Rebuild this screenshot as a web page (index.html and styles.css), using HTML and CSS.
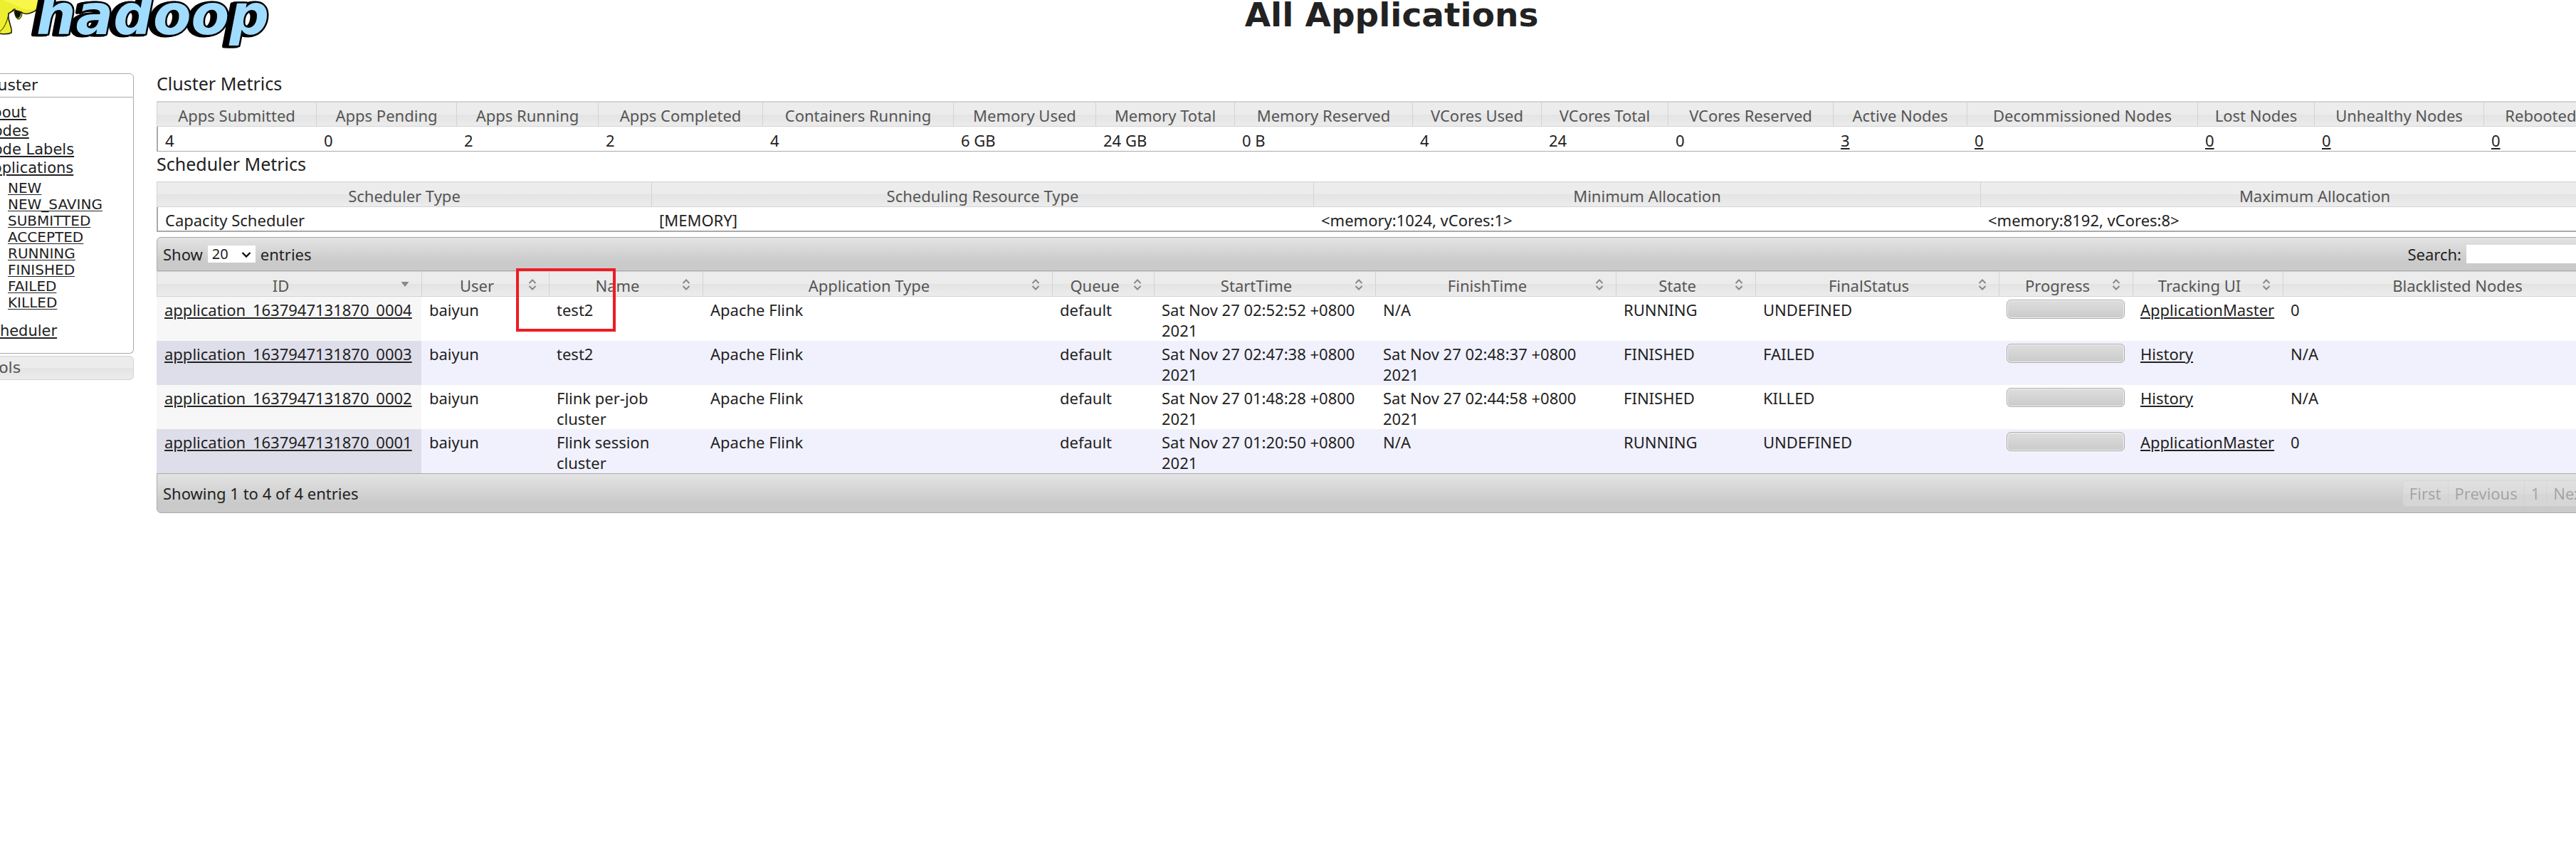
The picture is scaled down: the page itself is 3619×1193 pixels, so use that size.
FILE: index.html
```html
<!DOCTYPE html>
<html lang="en">
<head>
    <meta charset="UTF-8">
    <meta name="viewport" content="width=device-width, initial-scale=1.0">
    <title>All Applications</title>
    <link rel="stylesheet" href="styles.css">
</head>
<body>
    <!-- sort icons used in the table header -->
    <svg class="defs" width="0" height="0">
        <symbol id="sort-both" viewBox="0 0 12 16">
            <path d="M1.5 6 L6 1.5 L10.5 6 M1.5 10 L6 14.5 L10.5 10" fill="none" stroke="#888" stroke-width="2"/>
        </symbol>
        <symbol id="sort-desc" viewBox="0 0 12 16">
            <path d="M0.5 4 H11.5 L6 11 Z" fill="#888"/>
        </symbol>
    </svg>

    <div class="page">
        <header class="header">
            <a class="logo" href="#" aria-label="Hadoop">
                <svg width="430" height="90" viewBox="-48 -9 430 90">
                    <g stroke="#1a1a00" stroke-linejoin="round">
                        <path d="M-48 -9 H57 C57 6 54 14 46 17 C40 20 34 20 30 17 L20 14 L12 19 C10 30 18 38 16 46 C10 49 2 48 -6 46 L-20 40 Z" fill="#eeee30" stroke-width="1.5"/>
                        <path d="M12 20 C10 30 6 40 0 44" fill="none" stroke-width="1"/>
                        <path d="M20 16 C21 22 23 27 26 27 C30 26 31 22 31 18 Z" fill="#b8b800" stroke-width="1"/>
                        <path d="M21 15 C21 20 22 24 25 25 C28 24 29 20 29 17 Z" fill="#111" stroke-width="1"/>
                        <path d="M17 15 C18 13 20 12 22 13" fill="none" stroke-width="1"/>
                    </g>
                    <path d="M30 -9 H56 C56 4 53 10 46 13 C38 16 28 10 18 6 C10 2 2 0 -4 -4 Z" fill="#ffff66" opacity="0.5"/>
                    <text class="wordmark" x="51" y="48">hadoop</text>
                </svg>
            </a>
            <h1>All Applications</h1>
        </header>

        <div class="main">
            <nav class="sidebar">
                <h3 class="nav-title active">Cluster</h3>
                <div class="nav-body">
                    <ul>
                        <li><a href="#">About</a></li>
                        <li><a href="#">Nodes</a></li>
                        <li><a href="#">Node Labels</a></li>
                        <li><a href="#">Applications</a>
                            <ul class="states">
                                <li><a href="#">NEW</a></li>
                                <li><a href="#">NEW_SAVING</a></li>
                                <li><a href="#">SUBMITTED</a></li>
                                <li><a href="#">ACCEPTED</a></li>
                                <li><a href="#">RUNNING</a></li>
                                <li><a href="#">FINISHED</a></li>
                                <li><a href="#">FAILED</a></li>
                                <li><a href="#">KILLED</a></li>
                            </ul>
                        </li>
                        <li><a href="#">Scheduler</a></li>
                    </ul>
                </div>
                <h3 class="nav-title closed">Tools</h3>
            </nav>

            <div class="content">
                <h3>Cluster Metrics</h3>
                <table class="info metrics">
                    <thead>
                        <tr>
                            <th class="w-submitted">Apps Submitted</th>
                            <th class="w-pending">Apps Pending</th>
                            <th class="w-running">Apps Running</th>
                            <th class="w-completed">Apps Completed</th>
                            <th class="w-containers">Containers Running</th>
                            <th class="w-mem-used">Memory Used</th>
                            <th class="w-mem-total">Memory Total</th>
                            <th class="w-mem-reserved">Memory Reserved</th>
                            <th class="w-vc-used">VCores Used</th>
                            <th class="w-vc-total">VCores Total</th>
                            <th class="w-vc-reserved">VCores Reserved</th>
                            <th class="w-active">Active Nodes</th>
                            <th class="w-decommissioned">Decommissioned Nodes</th>
                            <th class="w-lost">Lost Nodes</th>
                            <th class="w-unhealthy">Unhealthy Nodes</th>
                            <th>Rebooted Nodes</th>
                        </tr>
                    </thead>
                    <tbody>
                        <tr>
                            <td>4</td>
                            <td>0</td>
                            <td>2</td>
                            <td>2</td>
                            <td>4</td>
                            <td>6 GB</td>
                            <td>24 GB</td>
                            <td>0 B</td>
                            <td>4</td>
                            <td>24</td>
                            <td>0</td>
                            <td><a href="#">3</a></td>
                            <td><a href="#">0</a></td>
                            <td><a href="#">0</a></td>
                            <td><a href="#">0</a></td>
                            <td><a href="#">0</a></td>
                        </tr>
                    </tbody>
                </table>

                <h3>Scheduler Metrics</h3>
                <table class="info scheduler">
                    <thead>
                        <tr>
                            <th class="w-type">Scheduler Type</th>
                            <th class="w-resource">Scheduling Resource Type</th>
                            <th class="w-min">Minimum Allocation</th>
                            <th>Maximum Allocation</th>
                        </tr>
                    </thead>
                    <tbody>
                        <tr>
                            <td>Capacity Scheduler</td>
                            <td>[MEMORY]</td>
                            <td>&lt;memory:1024, vCores:1&gt;</td>
                            <td>&lt;memory:8192, vCores:8&gt;</td>
                        </tr>
                    </tbody>
                </table>

                <div class="apps-wrapper">
                    <div class="toolbar top">
                        <label>Show
                            <span class="select">
                                <select>
                                    <option>20</option>
                                    <option>40</option>
                                    <option>60</option>
                                    <option>80</option>
                                    <option>100</option>
                                </select>
                                <svg viewBox="0 0 14 10"><path d="M1.5 2 L7 7.5 L12.5 2" fill="none" stroke="#111" stroke-width="2.4"/></svg>
                            </span>
                            entries</label>
                        <label>Search: <input type="text" class="search"></label>
                    </div>
                    <table class="apps">
                        <thead>
                            <tr>
                                <th class="w-id"><div class="sort"><span>ID</span><svg><use href="#sort-desc"/></svg></div></th>
                                <th class="w-user"><div class="sort"><span>User</span><svg><use href="#sort-both"/></svg></div></th>
                                <th class="w-name"><div class="sort"><span>Name</span><svg><use href="#sort-both"/></svg></div></th>
                                <th class="w-apptype"><div class="sort"><span>Application Type</span><svg><use href="#sort-both"/></svg></div></th>
                                <th class="w-queue"><div class="sort"><span>Queue</span><svg><use href="#sort-both"/></svg></div></th>
                                <th class="w-start"><div class="sort"><span>StartTime</span><svg><use href="#sort-both"/></svg></div></th>
                                <th class="w-finish"><div class="sort"><span>FinishTime</span><svg><use href="#sort-both"/></svg></div></th>
                                <th class="w-state"><div class="sort"><span>State</span><svg><use href="#sort-both"/></svg></div></th>
                                <th class="w-final"><div class="sort"><span>FinalStatus</span><svg><use href="#sort-both"/></svg></div></th>
                                <th class="w-progress"><div class="sort"><span>Progress</span><svg><use href="#sort-both"/></svg></div></th>
                                <th class="w-tracking"><div class="sort"><span>Tracking UI</span><svg><use href="#sort-both"/></svg></div></th>
                                <th><div class="sort"><span>Blacklisted Nodes</span><svg><use href="#sort-both"/></svg></div></th>
                            </tr>
                        </thead>
                        <tbody>
                            <tr>
                                <td><a href="#">application_1637947131870_0004</a></td>
                                <td>baiyun</td>
                                <td>test2</td>
                                <td>Apache Flink</td>
                                <td>default</td>
                                <td>Sat Nov 27 02:52:52 +0800 2021</td>
                                <td>N/A</td>
                                <td>RUNNING</td>
                                <td>UNDEFINED</td>
                                <td><div class="progress"></div></td>
                                <td><a href="#">ApplicationMaster</a></td>
                                <td>0</td>
                            </tr>
                            <tr>
                                <td><a href="#">application_1637947131870_0003</a></td>
                                <td>baiyun</td>
                                <td>test2</td>
                                <td>Apache Flink</td>
                                <td>default</td>
                                <td>Sat Nov 27 02:47:38 +0800 2021</td>
                                <td>Sat Nov 27 02:48:37 +0800 2021</td>
                                <td>FINISHED</td>
                                <td>FAILED</td>
                                <td><div class="progress"></div></td>
                                <td><a href="#">History</a></td>
                                <td>N/A</td>
                            </tr>
                            <tr>
                                <td><a href="#">application_1637947131870_0002</a></td>
                                <td>baiyun</td>
                                <td>Flink per-job cluster</td>
                                <td>Apache Flink</td>
                                <td>default</td>
                                <td>Sat Nov 27 01:48:28 +0800 2021</td>
                                <td>Sat Nov 27 02:44:58 +0800 2021</td>
                                <td>FINISHED</td>
                                <td>KILLED</td>
                                <td><div class="progress"></div></td>
                                <td><a href="#">History</a></td>
                                <td>N/A</td>
                            </tr>
                            <tr>
                                <td><a href="#">application_1637947131870_0001</a></td>
                                <td>baiyun</td>
                                <td>Flink session cluster</td>
                                <td>Apache Flink</td>
                                <td>default</td>
                                <td>Sat Nov 27 01:20:50 +0800 2021</td>
                                <td>N/A</td>
                                <td>RUNNING</td>
                                <td>UNDEFINED</td>
                                <td><div class="progress"></div></td>
                                <td><a href="#">ApplicationMaster</a></td>
                                <td>0</td>
                            </tr>
                        </tbody>
                    </table>
                    <div class="toolbar bottom">
                        <div>Showing 1 to 4 of 4 entries</div>
                        <div class="paginate">
                            <button disabled>First</button>
                            <button disabled>Previous</button>
                            <button disabled>1</button>
                            <button disabled>Next</button>
                            <button disabled>Last</button>
                        </div>
                    </div>
                    <div class="highlight"></div>
                </div>
            </div>
        </div>
    </div>
</body>
</html>
```
FILE: styles.css
```css
* {
    box-sizing: border-box;
}
body {
    margin: 0;
    min-height: 100vh;
    background: #fff;
    color: #222;
    font-family: "Noto Sans", "Open Sans", sans-serif;
    font-size: 22px;
    line-height: 29px;
    overflow: hidden;
}
.defs {
    position: absolute;
}
a {
    color: #222;
    text-decoration: underline;
    text-decoration-thickness: 2px;
    text-underline-offset: 2px;
}
ul {
    list-style: none;
    margin: 0;
    padding: 0;
}

/* the page is wider than the window on both sides */
.page {
    margin: -9px -103px 0 -48px;
}
.header {
    display: flex;
    height: 111px;
}
.logo {
    width: 236px;
    flex-shrink: 0;
}
.logo svg {
    display: block;
    overflow: visible;
}
.wordmark {
    font-family: "DejaVu Sans", sans-serif;
    font-size: 78px;
    font-weight: bold;
    font-style: italic;
    fill: #a0dcff;
    stroke: #000;
    stroke-width: 5px;
    stroke-linejoin: round;
    paint-order: stroke;
    filter: drop-shadow(-3px 1px 0 #000) drop-shadow(-4px 0 0 #000);
}
h1 {
    flex: 1;
    margin: 0;
    font-family: "DejaVu Sans", sans-serif;
    font-size: 47px;
    line-height: 60px;
    text-align: center;
}

.main {
    display: flex;
    align-items: flex-start;
    gap: 32px;
}

/* sidebar */
.sidebar {
    width: 236px;
    flex-shrink: 0;
    padding-top: 1px;
    font-family: "DejaVu Sans", sans-serif;
    font-size: 21px;
    line-height: 26px;
}
.nav-title {
    margin: 0;
    padding: 0 22px;
    font-size: 22px;
    font-weight: normal;
    line-height: 32px;
}
.nav-title.active {
    border: 1px solid #aaa;
    border-radius: 6px 6px 0 0;
}
.nav-title.closed {
    margin-top: 3px;
    border: 1px solid #d3d3d3;
    border-radius: 6px;
    background: linear-gradient(#ececec 50%, #e4e4e4 51%, #ececec);
    color: #555;
}
.nav-body {
    padding: 8px 22px 18px;
    border: 1px solid #aaa;
    border-top: 0;
    border-radius: 0 0 6px 6px;
}
.states {
    padding: 4px 0 15px 36px;
    font-size: 20px;
    line-height: 23px;
}
.states a {
    text-decoration-thickness: 1px;
}

/* tables */
.content {
    flex: 1;
    min-width: 0;
}
.content h3 {
    margin: 0 0 10px;
    font-size: 25px;
    font-weight: normal;
    line-height: 30px;
}
table {
    width: 100%;
    table-layout: fixed;
    border-collapse: separate;
    border-spacing: 0;
}
th {
    padding: 5px 0 0;
    border: 1px solid #d3d3d3;
    border-right: 0;
    background: linear-gradient(#ececec 50%, #e4e4e4 51%, #ececec);
    color: #555;
    font-weight: normal;
    white-space: nowrap;
}
th:last-child {
    border-right: 1px solid #d3d3d3;
}
td {
    padding: 4px 11px 0;
    vertical-align: top;
}
.info td {
    border-bottom: 1px solid #aaa;
}
.info td:first-child {
    border-left: 2px solid #aaa;
    padding-left: 10px;
}
.info td:last-child {
    border-right: 1px solid #aaa;
}
.metrics {
    margin-bottom: 2px;
}
.metrics th {
    padding-top: 4px;
    border-top-width: 2px;
}
.metrics td {
    padding-top: 5px;
}
.scheduler td {
    border-bottom-width: 2px;
}

.w-submitted { width: 224px; }
.w-pending { width: 197px; }
.w-running { width: 199px; }
.w-completed { width: 231px; }
.w-containers { width: 268px; }
.w-mem-used { width: 200px; }
.w-mem-total { width: 195px; }
.w-mem-reserved { width: 250px; }
.w-vc-used { width: 181px; }
.w-vc-total { width: 178px; }
.w-vc-reserved { width: 232px; }
.w-active { width: 188px; }
.w-decommissioned { width: 324px; }
.w-lost { width: 164px; }
.w-unhealthy { width: 238px; }

.w-type { width: 695px; }
.w-resource { width: 930px; }
.w-min { width: 937px; }

.w-id { width: 372px; }
.w-user { width: 179px; }
.w-name { width: 216px; }
.w-apptype { width: 491px; }
.w-queue { width: 143px; }
.w-start { width: 311px; }
.w-finish { width: 338px; }
.w-state { width: 196px; }
.w-final { width: 342px; }
.w-progress { width: 188px; }
.w-tracking { width: 211px; }

/* applications */
.apps-wrapper {
    position: relative;
    margin-top: 7px;
}
.toolbar {
    display: flex;
    justify-content: space-between;
    align-items: center;
    padding: 0 8px;
    border: 1px solid #aaa;
    background: linear-gradient(#e3e3e3, #cacaca 75%, #cacaca);
}
.toolbar.top {
    height: 48px;
    border-radius: 6px 6px 0 0;
}
.toolbar.bottom {
    height: 56px;
    border-radius: 0 0 6px 6px;
}
.toolbar label {
    display: flex;
    align-items: center;
    gap: 7px;
}
.select {
    display: flex;
    position: relative;
}
.select svg {
    position: absolute;
    top: 8px;
    right: 6px;
    width: 14px;
    height: 10px;
    pointer-events: none;
}
select {
    appearance: none;
    width: 67px;
    height: 24px;
    padding: 0 6px;
    border: 0;
    background: #fff;
    color: #222;
    font-family: inherit;
    font-size: 20px;
    line-height: 24px;
}
.search {
    width: 248px;
    height: 26px;
    border: 0;
    background: #fff;
    font-size: 20px;
}
.sort {
    display: flex;
    align-items: center;
}
.sort span {
    flex: 1;
}
.sort svg {
    width: 12px;
    height: 16px;
    margin: 0 17px 4px -5px;
}
.apps td {
    height: 62px;
}
.apps td:first-child {
    background: #f7f7f7;
}
.apps tbody tr:nth-child(even) td {
    background: #f1f1fd;
}
.apps tbody tr:nth-child(even) td:first-child {
    background: #dedeea;
}
.progress {
    height: 27px;
    border: 1px solid #aaa;
    border-radius: 6px;
    background: linear-gradient(#dedede, #cacaca);
    box-shadow: inset 0 0 0 1px #f4f4f4;
}
.paginate {
    display: flex;
    margin-right: 6px;
    opacity: 0.5;
}
.paginate button {
    height: 37px;
    padding: 0 9px;
    border: 1px solid #d3d3d3;
    border-right-width: 0;
    background: linear-gradient(#e4e4e4 50%, #dcdcdc 51%, #e4e4e4);
    color: #777;
    font-family: inherit;
    font-size: 22px;
    line-height: 29px;
}
.paginate button:first-child {
    border-radius: 6px 0 0 6px;
}
.paginate button:last-child {
    border-right-width: 1px;
    border-radius: 0 6px 6px 0;
}
.highlight {
    position: absolute;
    top: 44px;
    left: 505px;
    width: 140px;
    height: 89px;
    border: 4px solid #ed1c24;
}
```
